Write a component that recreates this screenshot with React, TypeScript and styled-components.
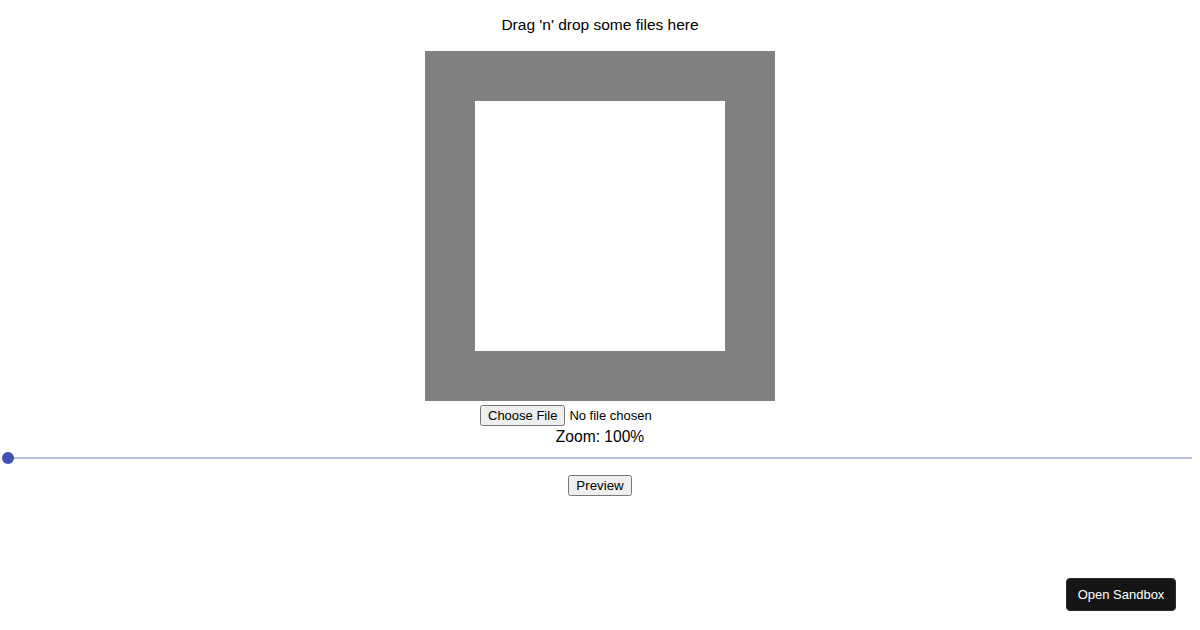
import React, { useState } from 'react';
import styled, { createGlobalStyle } from 'styled-components';

const GlobalStyle = createGlobalStyle`
  body {
    margin: 0;
    font-family: "Liberation Sans", Arial, sans-serif;
    color: #000;
    background: #fff;
  }
`;

const Page = styled.div`
  padding: 8px;
`;

const DropZone = styled.div`
  padding-top: 8px;
  text-align: center;

  p {
    margin: 0 0 17px;
    font-size: 15.5px;
    line-height: 18px;
  }
`;

const CropFrame = styled.div`
  box-sizing: border-box;
  width: 350px;
  height: 350px;
  margin: 0 auto;
  border: 50px solid #808080;
  background: #fff;
`;

const Controls = styled.div`
  display: flex;
  justify-content: center;
  margin-top: 4px;

  input {
    margin-left: 6px;
    font-family: "Liberation Sans", Arial, sans-serif;
    font-size: 13px;
  }
`;

const ZoomLabel = styled.div`
  margin-top: 2px;
  font-size: 15.6px;
  line-height: 18px;
  text-align: center;
`;

const SliderRoot = styled.div`
  position: relative;
  height: 2px;
  margin: 0 -8px;
  padding: 11px 8px 16px;
  cursor: pointer;
`;

const SliderRail = styled.div`
  height: 2px;
  background: #3f51b5;
  opacity: 0.38;
`;

const SliderThumb = styled.span<{ percent: number }>`
  position: absolute;
  top: 12px;
  left: calc(8px + (100% - 16px) * ${(props) => props.percent / 100});
  width: 12px;
  height: 12px;
  margin-left: -6px;
  margin-top: -6px;
  border-radius: 50%;
  background: #3f51b5;
`;

const PreviewRow = styled.div`
  display: flex;
  justify-content: center;

  button {
    font-family: "Liberation Sans", Arial, sans-serif;
    font-size: 13.3px;
  }
`;

const SandboxButton = styled.a`
  position: fixed;
  right: 24px;
  bottom: 19px;
  display: flex;
  align-items: center;
  justify-content: center;
  width: 110px;
  height: 33px;
  box-sizing: border-box;
  border-radius: 4px;
  border: 1px solid #2a2a2a;
  background: #151515;
  color: #fff;
  font-family: "Liberation Sans", Arial, sans-serif;
  font-size: 13px;
  text-decoration: none;
`;

const App: React.FC = () => {
  const [zoom] = useState(1);

  return (
    <Page>
      <GlobalStyle />
      <DropZone>
        <p>Drag 'n' drop some files here</p>
        <CropFrame />
      </DropZone>
      <Controls>
        <input type="file" />
      </Controls>
      <ZoomLabel>Zoom: {Math.round(zoom * 100)}%</ZoomLabel>
      <SliderRoot>
        <SliderRail />
        <SliderThumb percent={0} />
      </SliderRoot>
      <PreviewRow>
        <button type="button">Preview</button>
      </PreviewRow>
      <SandboxButton href="#">Open Sandbox</SandboxButton>
    </Page>
  );
};

export default App;
